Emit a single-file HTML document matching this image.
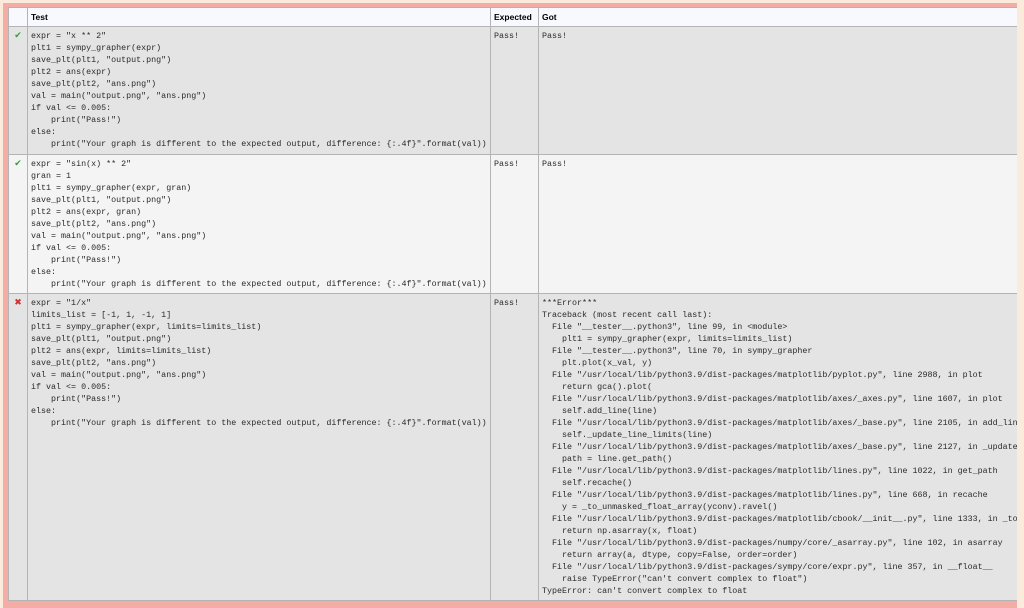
<!DOCTYPE html>
<html><head><meta charset="utf-8"><style>
html,body{margin:0;padding:0;width:1024px;height:608px;overflow:hidden;background:#faebdc;}
#wrap{position:absolute;left:3px;top:3px;width:1014px;height:605px;background:#f4aca6;overflow:hidden;}
table{position:absolute;left:5px;top:4px;border-collapse:collapse;table-layout:fixed;width:1130px;font-family:"Liberation Sans",sans-serif;}
td,th{border:1px solid #b4b4b4;vertical-align:top;padding:0;overflow:hidden;}
th{background:#f8f8ff;font-size:8.5px;font-weight:bold;text-align:left;height:18px;padding:0 3px;line-height:18px;}
pre{margin:0;font-family:"Liberation Mono",monospace;font-size:8.35px;line-height:12px;color:#2a2a2a;white-space:pre;}
.r1 td,.r3 td{background:#e4e4e4;}
.r2 td{background:#f4f4f4;}
.ic{text-align:center;font-size:9px;padding-top:3px;}
.c{padding:3px 3px 3px 3px;}
</style></head><body><div id="wrap">
<table>
<colgroup><col style="width:19px"><col style="width:463px"><col style="width:48px"><col style="width:600px"></colgroup>
<tr><th></th><th>Test</th><th>Expected</th><th>Got</th></tr>
<tr class="r1" style="height:128px"><td class="ic" style="color:#3a9a3a">&#10004;</td><td class="c"><pre>expr = "x ** 2"
plt1 = sympy_grapher(expr)
save_plt(plt1, "output.png")
plt2 = ans(expr)
save_plt(plt2, "ans.png")
val = main("output.png", "ans.png")
if val &lt;= 0.005:
    print("Pass!")
else:
    print("Your graph is different to the expected output, difference: {:.4f}".format(val))</pre></td><td class="c"><pre>Pass!</pre></td><td class="c"><pre>Pass!</pre></td></tr>
<tr class="r2" style="height:139px"><td class="ic" style="color:#3a9a3a">&#10004;</td><td class="c"><pre>expr = "sin(x) ** 2"
gran = 1
plt1 = sympy_grapher(expr, gran)
save_plt(plt1, "output.png")
plt2 = ans(expr, gran)
save_plt(plt2, "ans.png")
val = main("output.png", "ans.png")
if val &lt;= 0.005:
    print("Pass!")
else:
    print("Your graph is different to the expected output, difference: {:.4f}".format(val))</pre></td><td class="c"><pre>Pass!</pre></td><td class="c"><pre>Pass!</pre></td></tr>
<tr class="r3" style="height:307px"><td class="ic" style="color:#d03030">&#10006;</td><td class="c"><pre>expr = "1/x"
limits_list = [-1, 1, -1, 1]
plt1 = sympy_grapher(expr, limits=limits_list)
save_plt(plt1, "output.png")
plt2 = ans(expr, limits=limits_list)
save_plt(plt2, "ans.png")
val = main("output.png", "ans.png")
if val &lt;= 0.005:
    print("Pass!")
else:
    print("Your graph is different to the expected output, difference: {:.4f}".format(val))</pre></td><td class="c"><pre>Pass!</pre></td><td class="c"><pre>***Error***
Traceback (most recent call last):
  File "__tester__.python3", line 99, in &lt;module&gt;
    plt1 = sympy_grapher(expr, limits=limits_list)
  File "__tester__.python3", line 70, in sympy_grapher
    plt.plot(x_val, y)
  File "/usr/local/lib/python3.9/dist-packages/matplotlib/pyplot.py", line 2988, in plot
    return gca().plot(
  File "/usr/local/lib/python3.9/dist-packages/matplotlib/axes/_axes.py", line 1607, in plot
    self.add_line(line)
  File "/usr/local/lib/python3.9/dist-packages/matplotlib/axes/_base.py", line 2105, in add_line
    self._update_line_limits(line)
  File "/usr/local/lib/python3.9/dist-packages/matplotlib/axes/_base.py", line 2127, in _update_line_limits
    path = line.get_path()
  File "/usr/local/lib/python3.9/dist-packages/matplotlib/lines.py", line 1022, in get_path
    self.recache()
  File "/usr/local/lib/python3.9/dist-packages/matplotlib/lines.py", line 668, in recache
    y = _to_unmasked_float_array(yconv).ravel()
  File "/usr/local/lib/python3.9/dist-packages/matplotlib/cbook/__init__.py", line 1333, in _to_unmasked_float_array
    return np.asarray(x, float)
  File "/usr/local/lib/python3.9/dist-packages/numpy/core/_asarray.py", line 102, in asarray
    return array(a, dtype, copy=False, order=order)
  File "/usr/local/lib/python3.9/dist-packages/sympy/core/expr.py", line 357, in __float__
    raise TypeError("can't convert complex to float")
TypeError: can't convert complex to float</pre></td></tr>
</table>
</div></body></html>
